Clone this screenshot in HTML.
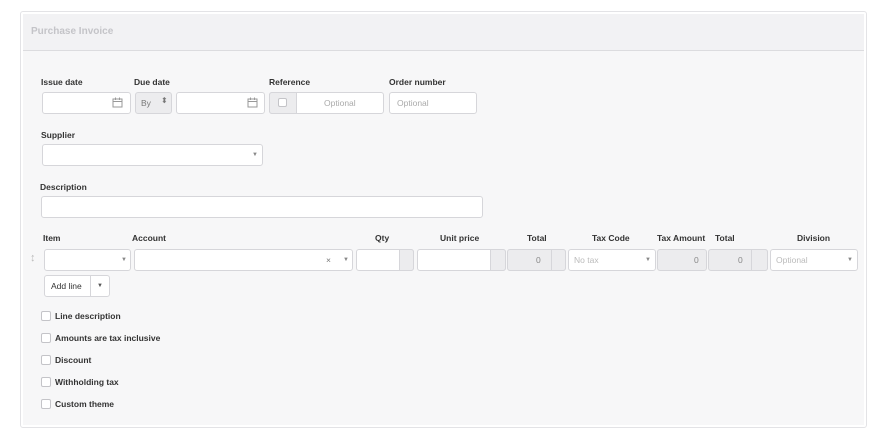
<!DOCTYPE html>
<html><head><meta charset="utf-8"><style>
*{box-sizing:border-box;margin:0;padding:0}
body{width:884px;height:442px;background:#fff;font-family:"Liberation Sans",Arial,sans-serif;position:relative;overflow:hidden}
.outer{position:absolute;left:20px;top:11px;width:847px;height:417px;border:1px solid #e3e3e6;border-radius:3px;background:#fff}
.inner{position:absolute;left:23px;top:14px;width:841px;height:411px;background:#f7f7f8}
.hdr{position:absolute;left:23px;top:14px;width:841px;height:37px;background:#f2f2f4;border-bottom:1px solid #dcdcdf}
.title{position:absolute;left:31px;top:26px;font-size:10px;color:#c4c4c8;font-weight:bold}
.l{position:absolute;font-size:8.5px;font-weight:bold;color:#333;white-space:nowrap}
.i{position:absolute;height:22px;background:#fff;border:1px solid #d6d6da;border-radius:3px}
.g{background:#ececee}
.ph{position:absolute;font-size:8.5px;color:#aaa}
.arr{position:absolute;font-size:6px;color:#888}
.cb{position:absolute;width:10px;height:10px;border:1px solid #c4c4c8;border-radius:2px;background:#fff}
.add{position:absolute}
</style></head><body>
<div class="outer"></div><div class="inner"></div><div class="hdr"></div>
<div class="title">Purchase Invoice</div>

<div class="l" style="left:41px;top:77px">Issue date</div>
<div class="l" style="left:134px;top:77px">Due date</div>
<div class="l" style="left:269px;top:77px">Reference</div>
<div class="l" style="left:389px;top:77px">Order number</div>

<div class="i" style="left:42px;top:92px;width:89px"></div>
<svg style="position:absolute;left:112px;top:97px" width="11" height="11"><rect x="1" y="2" width="9" height="8" fill="none" stroke="#999" stroke-width="1"/><line x1="1" y1="4.5" x2="10" y2="4.5" stroke="#999"/><line x1="3.5" y1="0.5" x2="3.5" y2="3" stroke="#999"/><line x1="7.5" y1="0.5" x2="7.5" y2="3" stroke="#999"/></svg>
<div class="i g" style="left:135px;top:92px;width:37px"></div>
<div class="ph" style="left:141px;top:98px;color:#777">By</div>
<div class="ph" style="left:161px;top:96px;color:#777;font-size:8px">⬍</div>
<div class="i" style="left:176px;top:92px;width:89px"></div>
<svg style="position:absolute;left:247px;top:97px" width="11" height="11"><rect x="1" y="2" width="9" height="8" fill="none" stroke="#999" stroke-width="1"/><line x1="1" y1="4.5" x2="10" y2="4.5" stroke="#999"/><line x1="3.5" y1="0.5" x2="3.5" y2="3" stroke="#999"/><line x1="7.5" y1="0.5" x2="7.5" y2="3" stroke="#999"/></svg>
<div class="i" style="left:269px;top:92px;width:115px"></div>
<div class="i g" style="left:269px;top:92px;width:28px;border-radius:3px 0 0 3px"></div>
<div class="cb" style="left:278px;top:98px;width:9px;height:9px"></div>
<div class="ph" style="left:324px;top:98px">Optional</div>
<div class="i" style="left:389px;top:92px;width:88px"></div>
<div class="ph" style="left:397px;top:98px">Optional</div>

<div class="l" style="left:41px;top:130px">Supplier</div>
<div class="i" style="left:42px;top:144px;width:221px"></div>
<div class="arr" style="left:252px;top:152px">▼</div>

<div class="l" style="left:40px;top:182px">Description</div>
<div class="i" style="left:41px;top:196px;width:442px"></div>

<div class="l" style="left:43px;top:233px">Item</div>
<div class="l" style="left:132px;top:233px">Account</div>
<div class="l" style="left:375px;top:233px">Qty</div>
<div class="l" style="left:440px;top:233px">Unit price</div>
<div class="l" style="left:527px;top:233px">Total</div>
<div class="l" style="left:592px;top:233px">Tax Code</div>
<div class="l" style="left:657px;top:233px">Tax Amount</div>
<div class="l" style="left:715px;top:233px">Total</div>
<div class="l" style="left:797px;top:233px">Division</div>

<div class="ph" style="left:30px;top:252px;color:#bbb;font-size:11px">↕</div>
<div class="i" style="left:44px;top:249px;width:87px"></div><div class="arr" style="left:121px;top:257px">▼</div>
<div class="i" style="left:134px;top:249px;width:219px"></div>
<div class="ph" style="left:326px;top:255px;color:#777">×</div><div class="arr" style="left:343px;top:257px">▼</div>
<div class="i" style="left:356px;top:249px;width:58px"></div><div class="i g" style="left:399px;top:249px;width:15px;border-radius:0 3px 3px 0"></div>
<div class="i" style="left:417px;top:249px;width:89px"></div><div class="i g" style="left:490px;top:249px;width:16px;border-radius:0 3px 3px 0"></div>
<div class="i g" style="left:507px;top:249px;width:59px"></div><div class="i g" style="left:551px;top:249px;width:15px;border-radius:0 3px 3px 0"></div>
<div class="ph" style="left:536px;top:255px;color:#888">0</div>
<div class="i" style="left:568px;top:249px;width:88px"></div><div class="ph" style="left:574px;top:255px;color:#bbb">No tax</div><div class="arr" style="left:645px;top:257px">▼</div>
<div class="i g" style="left:657px;top:249px;width:50px"></div><div class="ph" style="left:694px;top:255px;color:#888">0</div>
<div class="i g" style="left:708px;top:249px;width:60px"></div><div class="i g" style="left:751px;top:249px;width:17px;border-radius:0 3px 3px 0"></div>
<div class="ph" style="left:738px;top:255px;color:#888">0</div>
<div class="i" style="left:770px;top:249px;width:88px"></div><div class="ph" style="left:776px;top:255px;color:#bbb">Optional</div><div class="arr" style="left:847px;top:257px">▼</div>

<div class="i" style="left:44px;top:275px;width:66px"></div>
<div style="position:absolute;left:90px;top:276px;width:1px;height:20px;background:#d6d6da"></div>
<div class="ph" style="left:51px;top:281px;color:#333">Add line</div>
<div class="arr" style="left:97px;top:283px;color:#555">▼</div>

<div class="cb" style="left:41px;top:311px"></div><div class="l" style="left:55px;top:311px">Line description</div>
<div class="cb" style="left:41px;top:333px"></div><div class="l" style="left:55px;top:333px">Amounts are tax inclusive</div>
<div class="cb" style="left:41px;top:355px"></div><div class="l" style="left:55px;top:355px">Discount</div>
<div class="cb" style="left:41px;top:377px"></div><div class="l" style="left:55px;top:377px">Withholding tax</div>
<div class="cb" style="left:41px;top:399px"></div><div class="l" style="left:55px;top:399px">Custom theme</div>
</body></html>
